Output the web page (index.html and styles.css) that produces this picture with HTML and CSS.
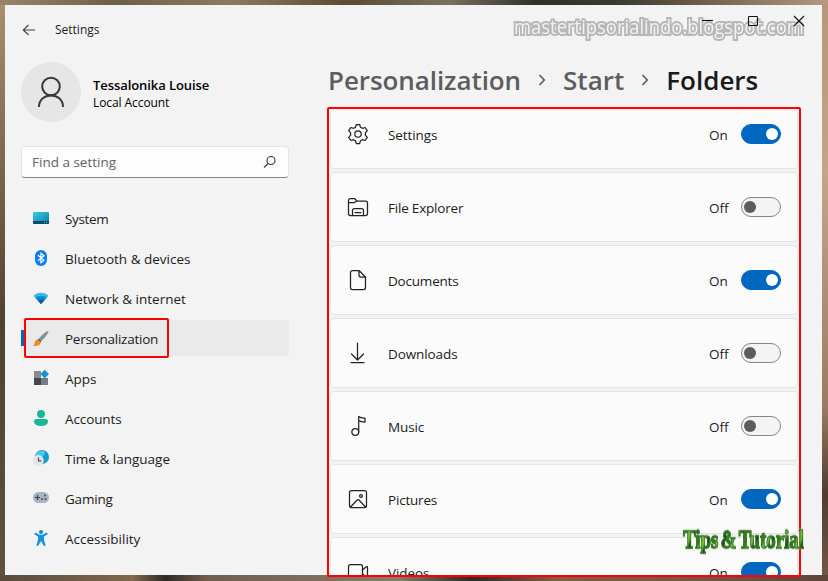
FILE: index.html
```html
<!DOCTYPE html>
<html lang="en">
<head>
<meta charset="utf-8">
<title>Settings</title>
<link rel="stylesheet" href="styles.css">
</head>
<body>
<div class="window">
  <header class="titlebar">
    <svg class="back" width="14" height="14" viewBox="0 0 14 14"><path d="M13 7H1.500M6.500 2 1.300 7l5.200 5"/></svg>
    <span class="app-name">Settings</span>
    <svg class="controls" width="104" height="14" viewBox="0 0 104 14"><path d="M1 6.500h11"/><rect x="47.500" y="2.500" width="9" height="9" rx=".7"/><path d="m93 2 10 10M103 2 93 12"/></svg>
  </header>
  <div class="body">
    <aside class="sidebar">
      <div class="profile">
        <div class="avatar"><svg width="30" height="34" viewBox="0 0 30 34"><circle cx="15" cy="11.500" r="8.800"/><path d="M3 32c0-15.500 24-15.500 24 0"/></svg></div>
        <div class="who"><strong>Tessalonika Louise</strong><span>Local Account</span></div>
      </div>
      <div class="search"><span>Find a setting</span><svg width="14" height="14" viewBox="0 0 14 14"><circle cx="8" cy="5.500" r="4"/><path d="m5 8.500-4 4"/></svg></div>
      <nav class="nav">
        <div class="item"><svg width="18" height="18" viewBox="0 0 18 18"><defs><linearGradient id="sys" x2="1" y2="1"><stop stop-color="#35cfe3"/><stop offset="1" stop-color="#087ca5"/></linearGradient></defs><rect x="1" y="2" width="16" height="12" rx="1" fill="url(#sys)"/><path d="M1 11h16v2a1 1 0 0 1-1 1H2a1 1 0 0 1-1-1z" fill="#0b4b70"/><path d="M12 12h1v1h-1zM14 12h1v1h-1z" fill="#65bddd"/></svg><span class="t-system">System</span></div>
        <div class="item"><svg width="18" height="18" viewBox="0 0 18 18"><rect x="3" y="0" width="12" height="16" rx="6" fill="#087ff0"/><path d="m6 5.200 6 5-3 2.600V3.200l3 2.600-6 5" fill="none" stroke="#fff" stroke-width="1.200"/></svg><span class="t-bluetooth">Bluetooth &amp; devices</span></div>
        <div class="item"><svg width="18" height="18" viewBox="0 0 18 18"><path d="M1.500 6C5 1.700 13 1.700 16.500 6L9 14z" fill="#34bdea"/><path d="M3.500 8c3-3 8-3 11 0L9 14z" fill="#0987c8"/><path d="M5.800 10.500c2-1.500 4.400-1.500 6.400 0L9 14z" fill="#075b9d"/></svg><span class="t-network">Network &amp; internet</span></div>
        <div class="item active"><svg width="18" height="18" viewBox="0 0 18 18"><path d="M16.400 1c-3 .5-7 4.500-9.400 7.500L9.500 11C12.500 8 16.500 3.500 16.400 1z" fill="#858e9c"/><path d="m7 8.500-1.600 1.300 2.900 2.900L9.500 11z" fill="#5c6571"/><path d="M5.500 9.500c-2.500.4-2.700 2.500-3.200 4.200-.2.900-.8 1.600-1.300 2 3.500.8 7.500 0 7.500-3.500z" fill="#f38d24"/></svg><span class="t-personal">Personalization</span></div>
        <div class="item"><svg width="18" height="18" viewBox="0 0 18 18"><path d="M2 1h7v7H2z" fill="#868b91"/><path d="M2 8h7v7H2z" fill="#42474d"/><path d="M9 8h7v7H9z" fill="#747b83"/><path d="m12.700-.2 4.300 4.300-4.300 4.300-4.300-4.300z" fill="#1792d9"/></svg><span class="t-apps">Apps</span></div>
        <div class="item"><svg width="18" height="18" viewBox="0 0 18 18"><circle cx="9" cy="4" r="4" fill="#19b795"/><path d="M4.500 9h9A2.500 2.500 0 0 1 16 11.500C16 14.500 12.800 16 9 16s-7-1.500-7-4.500A2.500 2.500 0 0 1 4.500 9z" fill="#19b795"/></svg><span class="t-accounts">Accounts</span></div>
        <div class="item"><svg width="18" height="18" viewBox="0 0 18 18"><circle cx="10" cy="7" r="7" fill="#159bd0"/><path d="M4 4c3-4 8-4 9-2 1 2-4 5-3 8H5z" fill="#48cce5"/><circle cx="6.300" cy="10.500" r="5.400" fill="#e2e4e8"/><path d="M6.500 7.500v3.300h2.800" fill="none" stroke="#4e5055" stroke-width="1.200"/></svg><span class="t-time">Time &amp; language</span></div>
        <div class="item"><svg width="18" height="18" viewBox="0 0 18 18"><rect x="1" y="2" width="16" height="11" rx="5.500" fill="#a9b5c0"/><path d="M5.500 5v5M3 7.500h5" stroke="#35404b" stroke-width="1.200"/><g fill="#37566e"><circle cx="10" cy="9" r="1"/><circle cx="13" cy="5.500" r="1"/><circle cx="13.500" cy="9" r="1"/></g></svg><span class="t-gaming">Gaming</span></div>
        <div class="item"><svg width="18" height="18" viewBox="0 0 18 18"><circle cx="9" cy="2" r="2" fill="#1883cd"/><path d="m3.500 2.800 4 2h3l4-2c1.200-.3 1.500 1.200.7 1.700L12 6.500V10l1.600 5.200c-.2 1-1.500 1-1.900.2L9 11l-2.700 4.400c-.4.800-1.700.8-1.900-.2L6 10V6.500L2.800 4.500c-.8-.5-.5-2 .7-1.700z" fill="#1691df"/></svg><span class="t-access">Accessibility</span></div>
      </nav>
    </aside>
    <main class="main">
      <h1 class="crumbs"><span class="c1">Personalization</span><svg width="8" height="12" viewBox="0 0 8 12"><path d="m1.500 1 4.700 5-4.700 5"/></svg><span class="c2">Start</span><svg width="8" height="12" viewBox="0 0 8 12"><path d="m1.500 1 4.700 5-4.700 5"/></svg><span class="c3">Folders</span></h1>
      <div class="list">
        <div class="card"><svg class="glyph" width="22" height="22" viewBox="0 0 22 22"><circle cx="11" cy="11" r="3.200"/><path d="M9.300 1.500h3.400l.7 2.700 2 1.100 2.700-.8 2.200 3.200-1.900 2.100v2.400l1.900 2.100-2.200 3.200-2.700-.8-2 1.100-.7 2.700H9.300l-.7-2.700-2-1.100-2.700.8-2.200-3.200 1.900-2.100V9.800L1.700 7.700l2.200-3.200 2.700.8 2-1.100z"/></svg><span class="name">Settings</span><span class="state">On</span><i class="toggle on"></i></div>
        <div class="card"><svg class="glyph" width="22" height="22" viewBox="0 0 22 22"><path d="M5.500 19.500h-2a2 2 0 0 1-2-2v-13a2 2 0 0 1 2-2h4l2.500 2.500h8.500a2 2 0 0 1 2 2v10.500a2 2 0 0 1-2 2h-2M1.500 6.500h6L10 5M5.500 19.500v-5a2 2 0 0 1 2-2h7a2 2 0 0 1 2 2v5zM8 16.500h6"/></svg><span class="name tight">File Explorer</span><span class="state">Off</span><i class="toggle"></i></div>
        <div class="card"><svg class="glyph" width="22" height="22" viewBox="0 0 22 22"><path d="M12 1.500H5.500a2 2 0 0 0-2 2v15a2 2 0 0 0 2 2h11a2 2 0 0 0 2-2V8zM12 1.500V6a2 2 0 0 0 2 2h4.500"/></svg><span class="name tight">Documents</span><span class="state">On</span><i class="toggle on"></i></div>
        <div class="card"><svg class="glyph" width="22" height="22" viewBox="0 0 22 22"><path d="M10.500 1v17M4.500 12l6 6 6-6M4 20.500h13"/></svg><span class="name">Downloads</span><span class="state">Off</span><i class="toggle"></i></div>
        <div class="card"><svg class="glyph" width="22" height="22" viewBox="0 0 22 22"><circle cx="8.300" cy="17" r="3.400"/><path d="M11.700 17V1.500c1.800 1.500 3.700 1.500 6.300 1.700V7c-2.600 0-4.500-.2-6.300-1.500"/></svg><span class="name">Music</span><span class="state">Off</span><i class="toggle"></i></div>
        <div class="card"><svg class="glyph" width="22" height="22" viewBox="0 0 22 22"><rect x="2.500" y="2.500" width="17" height="17" rx="2"/><circle cx="14" cy="8" r="1.400"/><path d="m3.500 19 7-7.200q.6-.6 1.200 0l6.800 7.200"/></svg><span class="name tight">Pictures</span><span class="state">On</span><i class="toggle on"></i></div>
        <div class="card"><svg class="glyph" width="22" height="22" viewBox="0 0 22 22"><rect x="1.500" y="3.500" width="14" height="15" rx="2"/><path d="m15.500 9 3.800-3.200q1.200-.6 1.200.6v9.200q0 1.200-1.200.6L15.500 13"/></svg><span class="name">Videos</span><span class="state">On</span><i class="toggle on"></i></div>
      </div>
    </main>
  </div>
</div>
<div class="mark mark-nav"></div>
<div class="mark mark-list"></div>
<div class="site">mastertipsorialindo.blogspot.com</div>
<div class="badge">Tips &amp; Tutorial</div>
</body>
</html>
```
FILE: styles.css
```css
* { box-sizing: border-box; }
html, body { margin: 0; height: 100%; overflow: hidden; }
body {
  position: relative;
  padding: 5px;
  font: 13.5px/20px "Open Sans", "Noto Sans", sans-serif;
  color: #1b1b1b;
  background:
    linear-gradient(90deg, #998467, #6d6048 14%, #8b7b5e 28%, #5a4b32 42%, #7b7160 54%, #2e3028 65%, #3c3b30 75%, #6c5a48 84%, #b49b80) top / 100% 5px no-repeat,
    linear-gradient(90deg, #5a4a3b, #80674e 16%, #2e2925 20%, #725c4b 25%, #8c7968 48%, #35251d 57%, #895a49 67%, #755446 85%, #604536) bottom / 100% 6px no-repeat,
    linear-gradient(#a8916f, #79644c 30%, #504230 55%, #5e5140) left / 5px 100% no-repeat,
    linear-gradient(#b59679, #c5a587 30%, #997b65 70%, #513b31 85%, #74584a);
}
svg { display: block; fill: none; flex: none; }
.window { width: 817px; height: 570px; background: #f3f3f3; overflow: hidden; }
.titlebar { height: 49px; display: flex; align-items: center; padding: 0 17px; }
.back { stroke: #444; stroke-width: 1.1; }
.app-name { margin-left: 19px; font-size: 12px; }
.controls { position: relative; z-index: 2; margin: -18px 0 0 auto; stroke: #111; stroke-width: 1.1; }
.body { display: flex; gap: 41px; }
.sidebar { width: 284px; padding-left: 16px; }
.profile { display: flex; align-items: center; height: 76px; gap: 12px; }
.avatar { width: 60px; height: 60px; border-radius: 50%; background: #e6e6e6; display: grid; place-items: center; }
.avatar svg { stroke: #383838; stroke-width: 2; }
.who { display: flex; flex-direction: column; padding-top: 3px; white-space: nowrap; color: #000; }
.who strong { font-size: 13px; font-weight: 600; line-height: 18px; letter-spacing: -.07px; }
.who span { font-size: 12px; line-height: 17px; letter-spacing: -.08px; }
.search { height: 32px; margin-top: 16px; padding: 0 11px 0 10px; border: 1px solid #e4e4e4; border-bottom-color: #858585; border-radius: 4px; background: #fdfdfd; display: flex; align-items: center; justify-content: space-between; color: #646464; }
.search svg { stroke: #333; stroke-width: 1.1; }
.nav { display: flex; flex-direction: column; gap: 4px; margin-top: 22px; }
.item { height: 36px; display: flex; align-items: center; gap: 15px; padding-left: 11px; border-radius: 4px; white-space: nowrap; }
.item svg { margin-top: 2px; overflow: visible; }
.item span { padding-top: 1px; }
.t-system { letter-spacing: -.35px; }
.t-personal { letter-spacing: -.25px; }
.t-gaming { letter-spacing: -.2px; }
.t-accounts { letter-spacing: -.1px; }
.active { background: linear-gradient(#0067c0, #0067c0) left / 3px 16px no-repeat #eaeaea; }
.main { width: 468px; }
.crumbs { margin: 0 0 0 -2px; height: 57px; padding-bottom: 6px; display: flex; align-items: center; font-size: 26px; line-height: 36px; font-weight: 600; color: #5d5d5d; white-space: nowrap; }
.crumbs svg { stroke: #5d5d5d; stroke-width: 1.7; margin: 0 17px; }
.crumbs .c1 { letter-spacing: -.08px; }
.crumbs .c3 { color: #1a1a1a; }
.list { height: 464px; overflow: hidden; display: flex; flex-direction: column; gap: 3px; }
.card { flex: none; height: 70px; display: flex; align-items: center; padding: 0 16px; background: #fbfbfb; border: 1px solid #e5e5e5; border-radius: 4px; }
.card:first-child { margin-top: -12px; }
.glyph { stroke: #222; stroke-width: 1.25; stroke-linejoin: round; stroke-linecap: round; }
.name { margin-left: 19px; flex: 1; padding-top: 2px; letter-spacing: -.1px; }
.tight { letter-spacing: -.2px; }
.state { width: 32px; padding-top: 2px; }
.toggle { width: 40px; height: 20px; border: 1px solid #858585; border-radius: 10px; padding: 3px 2px; background: #f4f4f4; display: flex; }
.toggle::before { content: ""; width: 12px; height: 12px; border-radius: 50%; background: #5d5d5d; }
.on { background: #0067c0; border-color: #0067c0; justify-content: flex-end; }
.on::before { background: #fff; }
.mark { position: absolute; border: 2px solid #f00; border-radius: 2px; }
.mark-nav { left: 24px; top: 318px; width: 145px; height: 40px; }
.mark-list { left: 327px; top: 107px; width: 474px; height: 470px; }
.site { position: absolute; left: 514px; top: 13px; font-size: 20px; line-height: 28px; color: #f2f2f2; -webkit-text-stroke: 4px #b4b4b4; paint-order: stroke fill; white-space: nowrap; transform-origin: left; transform: scaleX(.922); opacity: .95; }
.badge { position: absolute; left: 683px; top: 524px; font: bold 26px/32px "Liberation Serif", serif; word-spacing: -3px; white-space: nowrap; transform-origin: left; transform: scaleX(.725); color: transparent; background: repeating-linear-gradient(115deg, #2e7d1b 0 7px, #72bd35 10px 14px, #174c12 17px 20px); -webkit-background-clip: text; background-clip: text; -webkit-text-stroke: .9px #34792a; filter: drop-shadow(0 0 1px #999); }
```
